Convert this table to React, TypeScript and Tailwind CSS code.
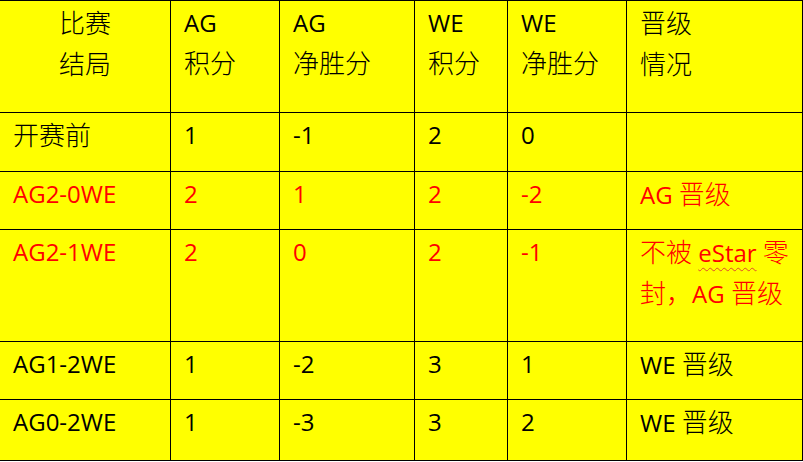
import React from 'react';

type Cell = { text: React.ReactNode; red?: boolean; center?: boolean };

// wrap runs of CJK characters so they render a little larger than the Latin text
function zh(s: string): React.ReactNode {
  const parts = s.split(/([\u3000-\u9fff\uff00-\uffef]+)/);
  return parts.map((p, i) =>
    /[\u3000-\u9fff\uff00-\uffef]/.test(p) ? (
      <span key={i} className="text-[26px] font-light">
        {p}
      </span>
    ) : (
      p
    )
  );
}

const rows: { h: string; cells: Cell[] }[] = [
  {
    h: 'h-[112px]',
    cells: [
      { text: <>{zh('比赛')}<br />{zh('结局')}</>, center: true },
      { text: <>AG<br />{zh('积分')}</> },
      { text: <>AG<br />{zh('净胜分')}</> },
      { text: <>WE<br />{zh('积分')}</> },
      { text: <>WE<br />{zh('净胜分')}</> },
      { text: <>{zh('晋级')}<br />{zh('情况')}</> },
    ],
  },
  {
    h: 'h-[59px]',
    cells: [{ text: zh('开赛前') }, { text: '1' }, { text: '-1' }, { text: '2' }, { text: '0' }, { text: '' }],
  },
  {
    h: 'h-[58px]',
    cells: [
      { text: 'AG2-0WE', red: true },
      { text: '2', red: true },
      { text: '1', red: true },
      { text: '2', red: true },
      { text: '-2', red: true },
      { text: zh('AG 晋级'), red: true },
    ],
  },
  {
    h: 'h-[112px]',
    cells: [
      { text: 'AG2-1WE', red: true },
      { text: '2', red: true },
      { text: '0', red: true },
      { text: '2', red: true },
      { text: '-1', red: true },
      {
        text: (
          <>
            {zh('不被')}{' '}
            <span className="underline decoration-wavy decoration-[#e04a2a] decoration-1 underline-offset-[5px]">eStar</span>{' '}
            {zh('零')}
            <br />
            {zh('封，AG 晋级')}
          </>
        ),
        red: true,
      },
    ],
  },
  {
    h: 'h-[58px]',
    cells: [{ text: 'AG1-2WE' }, { text: '1' }, { text: '-2' }, { text: '3' }, { text: '1' }, { text: zh('WE 晋级') }],
  },
  {
    h: 'h-[61px]',
    cells: [{ text: 'AG0-2WE' }, { text: '1' }, { text: '-3' }, { text: '3' }, { text: '2' }, { text: zh('WE 晋级') }],
  },
];

export default function App() {
  return (
    <div className="w-[803px] h-[462px] bg-white overflow-hidden">
      <div
        className="grid grid-cols-[171px_109px_135px_93px_119px_176px] border-t border-black bg-[#ffff00] text-[24px] leading-[40px]"
        style={{ fontFamily: '"Open Sans", "Noto Sans CJK SC", sans-serif' }}
      >
        {rows.map((row, ri) =>
          row.cells.map((c, ci) => (
            <div
              key={`${ri}-${ci}`}
              className={`${row.h} border-r border-b border-black px-[13px] pt-[2px] whitespace-nowrap ${
                c.red ? 'text-[#ff0000]' : 'text-black'
              } ${c.center ? 'text-center' : ''}`}
            >
              {c.text}
            </div>
          ))
        )}
      </div>
    </div>
  );
}
